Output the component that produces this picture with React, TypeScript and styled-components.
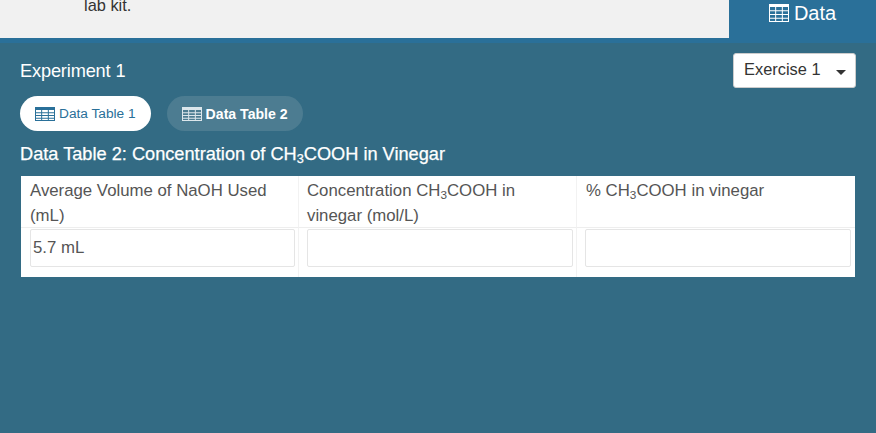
import React from "react";
import styled, { createGlobalStyle } from "styled-components";

const Global = createGlobalStyle`
  html, body { margin: 0; padding: 0; height: 100%; }
  body { background: #336b84; font-family: "Liberation Sans", Arial, sans-serif; overflow: hidden; }
  #root { height: 100%; }
  * { box-sizing: border-box; }
`;
const Page = styled.div`width: 876px; height: 433px; display: flex; flex-direction: column; background: #336b84; overflow: hidden;`;
const TopBar = styled.header`height: 43px; flex: none; display: flex; border-bottom: 5px solid #2a7099; background: #f1f1f1;`;
const Intro = styled.div`flex: 1; height: 38px; padding: 0 0 23px 84px; display: flex; align-items: flex-end; font-size: 16.4px; line-height: 20px; color: #333;`;
const MainTab = styled.div`width: 147px; background: #2a7099; color: #fff; display: flex; justify-content: center; gap: 5px; padding: 3px 0 0 0; font-size: 20px; line-height: 20px; align-items: flex-start;`;
const Panel = styled.main`flex: 1; padding: 10px 20px 0 20px; display: flex; flex-direction: column;`;
const HeadRow = styled.div`display: flex; justify-content: space-between; align-items: flex-start; height: 35px;`;
const Title = styled.h2`margin: 8px 0 0; font-size: 18.2px; line-height: 20px; font-weight: 400; color: #fff; letter-spacing: -0.15px;`;
const Select = styled.div`width: 123px; height: 35px; background: #fff; border: 1px solid #ccc; border-radius: 3px; color: #333; font-size: 16.4px; display: flex; align-items: center; justify-content: space-between; padding: 0 9px 2px 10px;`;
const Caret = styled.span`width: 0; height: 0; border-left: 5px solid transparent; border-right: 5px solid transparent; border-top: 5px solid #333; margin-top: 5px;`;
const Tabs = styled.div`display: flex; gap: 16px; margin-top: 8px;`;
const Tab = styled.div<{ $active?: boolean }>`height: 35px; padding: 0 15px; border-radius: 18px; display: flex; align-items: center; gap: 4px; font-size: ${p => p.$active ? 13.7 : 14.1}px; background: ${p => p.$active ? "#fff" : "#4c7c91"}; color: ${p => p.$active ? "#2a7099" : "#fff"}; font-weight: ${p => p.$active ? 400 : 700};`;
const Heading = styled.h3`margin: 13px 0 0; font-size: 18.2px; line-height: 20px; font-weight: 400; color: #fff; -webkit-text-stroke: 0.25px #fff;`;
const Table = styled.div`margin: 12px 0 0 1px; width: 834px; height: 101px; background: #fff; display: grid; grid-template-columns: 278px 278px 278px; grid-template-rows: 52px 49px;`;
const HeadCell = styled.div<{ $last?: boolean; $left?: number }>`padding: 2px 9px 0 ${p => p.$left ?? 9}px; font-size: 16.8px; line-height: 25px; color: #555; border-bottom: 1px solid #eee; border-right: ${p => p.$last ? "none" : "1px solid #f2f2f2"};`;
const InputCell = styled.div<{ $last?: boolean; $left?: number }>`padding: 1px ${p => p.$last ? 4 : 3}px 9px ${p => p.$left ?? 9}px; border-right: ${p => p.$last ? "none" : "1px solid #f2f2f2"}; display: flex;`;
const Input = styled.div`flex: 1; height: 38px; border: 1px solid #e5e5e5; border-radius: 2px; padding: 0 2px; font-size: 16.8px; color: #555; display: flex; align-items: center;`;
const Sub = styled.sub`font-size: 0.7em; line-height: 0; vertical-align: -3px;`;
const IconSlot = styled.span`display: flex; margin-top: 1px;`;

const GridIcon = ({ w, h, color, lw = 1 }: { w: number; h: number; color: string; lw?: number }) => {
  const cols = [1, 2].map(i => (w * i) / 3);
  const rows = [1, 2, 3].map(i => 3 + ((h - 3) * i) / 4);
  return (
    <svg width={w} height={h} viewBox={`0 0 ${w} ${h}`} fill="none" stroke={color} strokeWidth={lw} style={{ flex: "none" }}>
      <rect x={0.5} y={0.5} width={w - 1} height={h - 1} />
      <rect x={0} y={0} width={w} height={3} fill={color} stroke="none" />
      {cols.map(x => <line key={x} x1={x} x2={x} y1={0} y2={h} />)}
      {rows.map(y => <line key={y} x1={0} x2={w} y1={y} y2={y} />)}
    </svg>
  );
};

const CH3 = () => <>CH<Sub>3</Sub>COOH</>;

export default function App() {
  return (
    <Page>
      <Global />
      <TopBar>
        <Intro>lab kit.</Intro>
        <MainTab><IconSlot><GridIcon w={20} h={18} color="#fff" /></IconSlot><span>Data</span></MainTab>
      </TopBar>
      <Panel>
        <HeadRow>
          <Title>Experiment 1</Title>
          <Select>Exercise 1<Caret /></Select>
        </HeadRow>
        <Tabs>
          <Tab $active><GridIcon w={20} h={14} color="#2a7099" />Data Table 1</Tab>
          <Tab><GridIcon w={20} h={14} color="#dce6eb" />Data Table 2</Tab>
        </Tabs>
        <Heading>Data Table 2: Concentration of CH<Sub>3</Sub>COOH in Vinegar</Heading>
        <Table>
          <HeadCell>Average Volume of NaOH Used (mL)</HeadCell>
          <HeadCell $left={8}>Concentration <CH3 /> in vinegar (mol/L)</HeadCell>
          <HeadCell $last>% <CH3 /> in vinegar</HeadCell>
          <InputCell><Input>5.7 mL</Input></InputCell>
          <InputCell $left={8}><Input /></InputCell>
          <InputCell $last $left={8}><Input /></InputCell>
        </Table>
      </Panel>
    </Page>
  );
}
